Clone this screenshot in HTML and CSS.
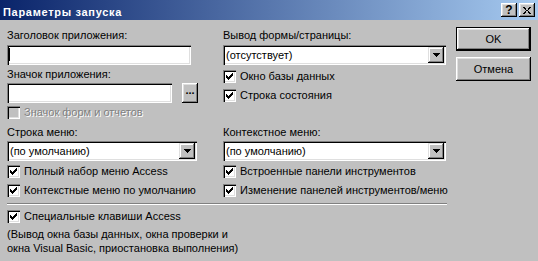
FILE: index.html
```html
<!DOCTYPE html>
<html lang="ru">
<head>
    <meta charset="UTF-8">
    <meta name="viewport" content="width=device-width, initial-scale=1.0">
    <title>Параметры запуска</title>
    <link rel="stylesheet" href="styles.css">
</head>
<body>
    <div class="titlebar">
        <span class="title">Параметры запуска</span>
        <div class="caption-buttons">
            <span class="caption-btn help">?</span>
            <span class="caption-btn">
                <svg width="8" height="7" viewBox="0 0 8 7" shape-rendering="crispEdges">
                    <path d="M0 0h2v1H0zM1 1h2v1H1zM2 2h1v1H2zM3 3h2v1H3zM5 4h1v1H5zM5 5h2v1H5zM6 6h2v1H6zM6 0h2v1H6zM5 1h2v1H5zM5 2h1v1H5zM2 4h1v1H2zM1 5h2v1H1zM0 6h2v1H0z"/>
                </svg>
            </span>
        </div>
    </div>

    <div class="dialog">
        <div class="form">
            <div class="section">
                <div class="col">
                    <div class="label">Заголовок приложения:</div>
                    <div class="field field-title"><span class="caret"></span></div>
                    <div class="label label-next">Значок приложения:</div>
                    <div class="icon-row">
                        <div class="field field-icon"></div>
                        <button class="btn browse">...</button>
                    </div>
                    <div class="check disabled check-icon">
                        <span class="box"></span>Значок форм и отчетов
                    </div>
                </div>
                <div class="col">
                    <div class="label">Вывод формы/страницы:</div>
                    <div class="combo combo-form">
                        <span class="combo-text">(отсутствует)</span>
                        <span class="combo-btn"><svg width="7" height="4" shape-rendering="crispEdges"><path d="M0 0h7v1H0zM1 1h5v1H1zM2 2h3v1H2zM3 3h1v1H3z"/></svg></span>
                    </div>
                    <div class="check check-first">
                        <span class="box"><svg width="13" height="13" shape-rendering="crispEdges"><path d="M3 5h1v3H3zM4 6h1v3H4zM5 7h1v3H5zM6 6h1v3H6zM7 5h1v3H7zM8 4h1v3H8zM9 3h1v3H9z"/></svg></span>Окно базы данных
                    </div>
                    <div class="check">
                        <span class="box"><svg width="13" height="13" shape-rendering="crispEdges"><path d="M3 5h1v3H3zM4 6h1v3H4zM5 7h1v3H5zM6 6h1v3H6zM7 5h1v3H7zM8 4h1v3H8zM9 3h1v3H9z"/></svg></span>Строка состояния
                    </div>
                </div>
            </div>

            <div class="section section-menu">
                <div class="col">
                    <div class="label">Строка меню:</div>
                    <div class="combo combo-menu">
                        <span class="combo-text">(по умолчанию)</span>
                        <span class="combo-btn"><svg width="7" height="4" shape-rendering="crispEdges"><path d="M0 0h7v1H0zM1 1h5v1H1zM2 2h3v1H2zM3 3h1v1H3z"/></svg></span>
                    </div>
                    <div class="check check-after-combo">
                        <span class="box"><svg width="13" height="13" shape-rendering="crispEdges"><path d="M3 5h1v3H3zM4 6h1v3H4zM5 7h1v3H5zM6 6h1v3H6zM7 5h1v3H7zM8 4h1v3H8zM9 3h1v3H9z"/></svg></span>Полный набор меню Access
                    </div>
                    <div class="check">
                        <span class="box"><svg width="13" height="13" shape-rendering="crispEdges"><path d="M3 5h1v3H3zM4 6h1v3H4zM5 7h1v3H5zM6 6h1v3H6zM7 5h1v3H7zM8 4h1v3H8zM9 3h1v3H9z"/></svg></span>Контекстные меню по умолчанию
                    </div>
                </div>
                <div class="col">
                    <div class="label">Контекстное меню:</div>
                    <div class="combo combo-context">
                        <span class="combo-text">(по умолчанию)</span>
                        <span class="combo-btn"><svg width="7" height="4" shape-rendering="crispEdges"><path d="M0 0h7v1H0zM1 1h5v1H1zM2 2h3v1H2zM3 3h1v1H3z"/></svg></span>
                    </div>
                    <div class="check check-after-combo">
                        <span class="box"><svg width="13" height="13" shape-rendering="crispEdges"><path d="M3 5h1v3H3zM4 6h1v3H4zM5 7h1v3H5zM6 6h1v3H6zM7 5h1v3H7zM8 4h1v3H8zM9 3h1v3H9z"/></svg></span>Встроенные панели инструментов
                    </div>
                    <div class="check">
                        <span class="box"><svg width="13" height="13" shape-rendering="crispEdges"><path d="M3 5h1v3H3zM4 6h1v3H4zM5 7h1v3H5zM6 6h1v3H6zM7 5h1v3H7zM8 4h1v3H8zM9 3h1v3H9z"/></svg></span>Изменение панелей инструментов/меню
                    </div>
                </div>
            </div>

            <div class="separator"></div>

            <div class="check check-keys">
                <span class="box"><svg width="13" height="13" shape-rendering="crispEdges"><path d="M3 5h1v3H3zM4 6h1v3H4zM5 7h1v3H5zM6 6h1v3H6zM7 5h1v3H7zM8 4h1v3H8zM9 3h1v3H9z"/></svg></span>Специальные клавиши Access
            </div>
            <div class="note">
                (Вывод окна базы данных, окна проверки и<br>
                окна Visual Basic, приостановка выполнения)
            </div>
        </div>

        <div class="buttons">
            <button class="btn btn-default">OK</button>
            <button class="btn">Отмена</button>
        </div>
    </div>
</body>
</html>
```

FILE: styles.css
```css
body {
    margin: 0;
    background-color: #c0c0c0;
    font-family: "Liberation Sans", Arial, sans-serif;
    font-size: 11px;
    line-height: 13px;
    color: #000;
}

/* title bar */
.titlebar {
    display: flex;
    justify-content: space-between;
    height: 20px;
    padding: 0 3px;
    background: linear-gradient(to right, #0a246a, #a6caf0);
}

.title {
    margin-top: 6px;
    color: #fff;
    font-weight: bold;
    letter-spacing: 0.7px;
}

.caption-buttons {
    display: flex;
    gap: 2px;
    margin-top: 3px;
}

.caption-btn {
    display: flex;
    align-items: center;
    justify-content: center;
    width: 16px;
    height: 14px;
    background-color: #c0c0c0;
    box-shadow: inset -1px -1px #000, inset 1px 1px #fff, inset -2px -2px #808080, inset 2px 2px #dfdfdf;
}

.caption-btn.help {
    font-weight: bold;
    font-size: 12px;
    line-height: 14px;
}

/* dialog body */
.dialog {
    display: flex;
    padding: 9px 0 0 7px;
}

.form {
    width: 440px;
}

.section {
    display: grid;
    grid-template-columns: 193px 224px;
    column-gap: 23px;
    align-items: start;
}

.section-menu {
    margin-top: 7px;
}

.col {
    display: flex;
    flex-direction: column;
    align-items: flex-start;
}

.label-next {
    margin-top: 3px;
}

/* sunken fields */
.field,
.combo,
.box {
    box-sizing: border-box;
    background-color: #fff;
    box-shadow: inset 1px 1px #808080, inset 2px 2px #000, inset -1px -1px #fff, inset -2px -2px #dfdfdf;
}

.field {
    height: 20px;
}

.field-title {
    width: 184px;
    margin-top: 3px;
}

.caret {
    display: block;
    width: 1px;
    height: 13px;
    margin: 3px 0 0 2px;
    background-color: #000;
}

.icon-row {
    display: flex;
    gap: 10px;
    margin-top: 2px;
}

.field-icon {
    width: 165px;
}

.combo {
    display: flex;
    align-items: center;
    height: 20px;
    padding: 2px;
    margin-top: 3px;
}

.combo-menu {
    width: 190px;
    margin-top: 2px;
}

.combo-form,
.combo-context {
    width: 223px;
}

.combo-context {
    margin-top: 2px;
}

.combo-text {
    flex: 1;
    padding-left: 1px;
}

.combo-btn {
    display: flex;
    align-items: center;
    justify-content: center;
    width: 16px;
    height: 16px;
    background-color: #c0c0c0;
    box-shadow: inset -1px -1px #000, inset 1px 1px #dfdfdf, inset -2px -2px #808080, inset 2px 2px #fff;
}

/* checkboxes */
.check {
    display: flex;
    align-items: center;
    height: 13px;
    margin-top: 6px;
    white-space: nowrap;
}

.check-first {
    margin-top: 5px;
}

.check-icon {
    margin-top: 3px;
}

.check-after-combo {
    margin-top: 4px;
}

.check-keys {
    margin-top: 5px;
}

.box {
    flex: none;
    width: 13px;
    height: 13px;
    margin-right: 4px;
}

.box svg {
    display: block;
}

.disabled {
    color: #808080;
    text-shadow: 1px 1px #fff;
}

.disabled .box {
    background-color: #c0c0c0;
}

.separator {
    margin-top: 6px;
    border-top: 1px solid #808080;
    border-bottom: 1px solid #fff;
}

.note {
    margin-top: 4px;
    line-height: 14px;
}

/* buttons */
.btn {
    box-sizing: border-box;
    width: 75px;
    height: 24px;
    padding: 0;
    border: none;
    background-color: #c0c0c0;
    font: inherit;
    color: #000;
    box-shadow: inset -1px -1px #000, inset 1px 1px #fff, inset -2px -2px #808080, inset 2px 2px #dfdfdf;
}

.btn-default {
    border: 1px solid #000;
}

.buttons {
    display: flex;
    flex-direction: column;
    gap: 6px;
    margin: -2px 0 0 9px;
}

.browse {
    width: 16px;
    height: 20px;
    padding-bottom: 6px;
    font-weight: bold;
    line-height: 10px;
}
```
